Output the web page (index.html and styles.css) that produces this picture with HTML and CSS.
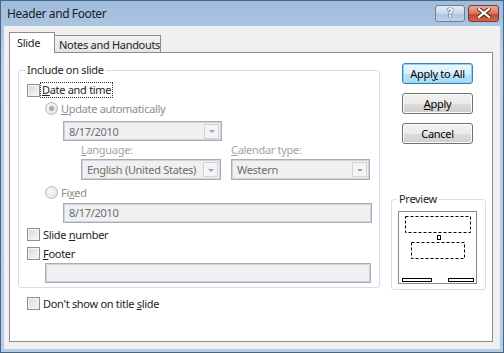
FILE: index.html
```html
<!DOCTYPE html>
<html>

<head>
  <title>Header and Footer</title>
  <link rel="stylesheet" href="styles.css">
</head>

<body>
  <div class="window">
    <div class="titlebar">
      <span class="title">Header and Footer</span>
      <div class="caption-buttons">
        <span class="cap-btn help">?</span>
        <span class="cap-btn close">
          <svg width="14" height="10" viewBox="0 0 14 10">
            <path d="M2 1 L12 9 M12 1 L2 9" stroke="#5a2a22" stroke-width="4.2" stroke-linecap="square"/>
            <path d="M2 1 L12 9 M12 1 L2 9" stroke="#fff" stroke-width="2.2" stroke-linecap="square"/>
          </svg>
        </span>
      </div>
    </div>

    <div class="client">
      <div class="tabs">
        <span class="tab active">Slide</span>
        <span class="tab">Notes and Handouts</span>
      </div>

      <div class="panel">
        <div class="left">
          <fieldset class="group include">
            <legend>Include on slide</legend>

            <div class="row">
              <span class="checkbox"></span>
              <span class="focus"><u>D</u>ate and time</span>
            </div>

            <div class="row disabled indent-1">
              <span class="radio checked"></span>
              <span class="row-text"><u>U</u>pdate automatically</span>
            </div>

            <div class="combo date-combo">
              <span class="value">8/17/2010</span>
              <span class="drop"></span>
            </div>

            <div class="fields">
              <div class="field lang">
                <span class="field-label"><u>L</u>anguage:</span>
                <div class="combo">
                  <span class="value">English (United States)</span>
                  <span class="drop"></span>
                </div>
              </div>
              <div class="field calendar">
                <span class="field-label"><u>C</u>alendar type:</span>
                <div class="combo">
                  <span class="value">Western</span>
                  <span class="drop"></span>
                </div>
              </div>
            </div>

            <div class="row disabled indent-1 fixed-row">
              <span class="radio"></span>
              <span class="row-text">Fi<u>x</u>ed</span>
            </div>

            <div class="textbox fixed-box">8/17/2010</div>

            <div class="row slide-row">
              <span class="checkbox"></span>
              <span class="row-text">Slide <u>n</u>umber</span>
            </div>

            <div class="row footer-row">
              <span class="checkbox"></span>
              <span class="row-text"><u>F</u>ooter</span>
            </div>

            <div class="textbox footer-box"></div>
          </fieldset>

          <div class="row title-row">
            <span class="checkbox"></span>
            <span class="row-text">Don't show on title <u>s</u>lide</span>
          </div>
        </div>

        <div class="right">
          <button class="btn default">Appl<u>y</u> to All</button>
          <button class="btn"><u>A</u>pply</button>
          <button class="btn">Cancel</button>

          <fieldset class="group preview">
            <legend>Preview</legend>
            <div class="preview-box">
              <svg width="77" height="71" viewBox="0 0 77 71">
                <rect x="6.5" y="4.5" width="65" height="16" fill="none" stroke="#000" stroke-dasharray="3 2"/>
                <rect x="38.5" y="23.5" width="3" height="4" fill="none" stroke="#000"/>
                <rect x="12.5" y="30.5" width="53" height="16" fill="none" stroke="#000" stroke-dasharray="3 2"/>
                <rect x="3.5" y="66.5" width="29" height="3" fill="none" stroke="#000"/>
                <rect x="49.5" y="66.5" width="25" height="3" fill="none" stroke="#000"/>
              </svg>
            </div>
          </fieldset>
        </div>
      </div>
    </div>
  </div>
</body>

</html>
```

FILE: styles.css
```css
body {
  margin: 0;
  font-family: "Noto Sans", sans-serif;
  font-size: 11px;
  letter-spacing: -0.3px;
  color: #1e1e1e;
}

.window {
  width: 504px;
  height: 353px;
  box-sizing: border-box;
  border: 1px solid #4a6482;
  padding: 0 3px 3px;
  background: linear-gradient(#9fbcdc, #b9d1ea 60px, #b4cde8);
  display: flex;
  flex-direction: column;
}

/* title bar */
.titlebar {
  height: 25px;
  display: flex;
  align-items: center;
  padding-left: 3px;
}

.title {
  flex: 1;
  font-size: 12px;
  letter-spacing: -0.4px;
  color: #1b1b1b;
  line-height: 16px;
}

.caption-buttons {
  display: flex;
  gap: 3px;
  margin-right: 1px;
  margin-top: -1px;
}

.cap-btn {
  height: 17px;
  box-sizing: border-box;
  border: 1px solid #6d7f95;
  border-radius: 3px;
  display: flex;
  align-items: center;
  justify-content: center;
}

.help {
  width: 30px;
  background: linear-gradient(#e4edf7, #c5d7ec 50%, #afc6e1 51%, #bdd1e9);
  color: #fff;
  font-family: "DejaVu Sans", sans-serif;
  font-weight: bold;
  font-size: 12px;
  text-shadow: 0 0 1px #33475f, 0 0 1px #33475f, 0 0 1px #33475f;
}

.close {
  width: 31px;
  border-color: #7a3a30;
  background: linear-gradient(#e9a796, #d7765f 50%, #c3452c 51%, #d3664a);
}

/* client area */
.client {
  flex: 1;
  background: #f0f0f0;
  padding: 6px 7px 7px 5px;
  display: flex;
  flex-direction: column;
}

.tabs {
  display: flex;
  align-items: flex-end;
  margin-bottom: -1px;
}

.tab {
  box-sizing: border-box;
  border: 1px solid #898c95;
  border-bottom: none;
  height: 17px;
  margin-bottom: 1px;
  padding: 0 4px;
  line-height: 17px;
  white-space: nowrap;
  background: linear-gradient(#f3f3f3, #e5e5e5);
  color: #1e1e1e;
}

.tab.active {
  position: relative;
  z-index: 1;
  height: 21px;
  width: 46px;
  margin-bottom: 0;
  padding: 0 7px;
  line-height: 20px;
  background: #fff;
}

.tab + .tab {
  margin-left: -1px;
  width: 107px;
}

.panel {
  flex: 1;
  background: #fff;
  border: 1px solid #898c95;
  display: flex;
}

.left {
  padding: 9px 0 0 8px;
}

.right {
  margin-left: 11px;
  width: 95px;
  padding-top: 10px;
  display: flex;
  flex-direction: column;
}

/* group boxes */
.group {
  margin: 0;
  min-width: 0;
  box-sizing: border-box;
  border: 1px solid #d5dfe5;
  border-radius: 3px;
}

.group legend {
  line-height: 16px;
  padding: 0 2px;
}

.include {
  width: 362px;
  padding: 4px 7px 4px 8px;
}

.include legend {
  margin-left: -2px;
}

.row {
  display: flex;
  align-items: center;
  height: 16px;
}

.row-text {
  margin-left: 3px;
}

.indent-1 {
  margin-left: 18px;
  margin-top: 2px;
}

.disabled {
  color: #8d8d8d;
}

.focus {
  margin-left: 1px;
  padding: 0 1px;
  line-height: 14px;
  outline: 1px dotted #333;
}

.checkbox {
  width: 13px;
  height: 13px;
  box-sizing: border-box;
  border: 1px solid #8f8f8f;
  background: linear-gradient(135deg, #d6d8db, #f8f8f8);
  box-shadow: inset 0 0 0 1px #f4f4f4;
  flex-shrink: 0;
}

.radio {
  width: 13px;
  height: 13px;
  box-sizing: border-box;
  border: 1px solid #b9b9b9;
  border-radius: 50%;
  background: radial-gradient(circle at 40% 40%, #fafafa, #dcdcdc);
  display: flex;
  align-items: center;
  justify-content: center;
  flex-shrink: 0;
}

.radio.checked::after {
  content: "";
  width: 5px;
  height: 5px;
  border-radius: 50%;
  background: #a8a8a8;
}

/* combos and text boxes */
.combo,
.textbox {
  box-sizing: border-box;
  border: 1px solid #abadb3;
  box-shadow: inset 0 0 0 1px #c3d6ec;
  background: #f0f0f0;
  color: #6d6d6d;
}

.combo {
  display: flex;
  align-items: center;
  height: 21px;
  padding: 0 2px 0 5px;
}

.combo .value {
  flex: 1;
  white-space: nowrap;
}

.drop {
  width: 15px;
  height: 15px;
  box-sizing: border-box;
  border: 1px solid #d2d2d2;
  background: #f4f4f4;
  display: flex;
  align-items: center;
  justify-content: center;
}

.drop::after {
  content: "";
  border-left: 3px solid transparent;
  border-right: 3px solid transparent;
  border-top: 3px solid #a6a6a6;
  margin-top: 1px;
}

.date-combo {
  margin: 5px 0 0 36px;
  width: 159px;
  height: 20px;
}

.fields {
  display: flex;
  gap: 10px;
  margin: 1px 0 0 54px;
}

.field {
  display: flex;
  flex-direction: column;
}

.field-label {
  line-height: 16px;
  color: #a3a3a3;
}

.field .combo {
  margin-top: 1px;
}

.lang {
  width: 140px;
}

.calendar {
  width: 139px;
}

.fixed-row {
  margin-top: 4px;
}

.textbox {
  height: 20px;
  line-height: 18px;
  padding-left: 5px;
}

.fixed-box {
  margin: 3px 0 0 36px;
  width: 309px;
}

.slide-row {
  margin-top: 3px;
}

.footer-row {
  margin-top: 3px;
}

.footer-box {
  margin: 2px 0 0 18px;
  width: 326px;
}

.title-row {
  margin: 7px 0 0 9px;
}

/* buttons */
.btn {
  font-family: inherit;
  font-size: 11px;
  letter-spacing: -0.3px;
  color: #000;
  width: 71px;
  height: 21px;
  margin: 0 0 9px 11px;
  padding: 0;
  border: 1px solid #707070;
  border-radius: 3px;
  background: linear-gradient(#f2f2f2, #ebebeb 50%, #dddddd 51%, #cfcfcf);
  box-shadow: inset 0 0 0 1px #fcfcfc;
}

.btn.default {
  border-color: #3c7fb1;
  background: linear-gradient(#ecf7fd, #dcf0fb 50%, #bee4f8 51%, #a8d9f5);
  box-shadow: inset 0 0 0 1px #8fd2f5;
}

.preview {
  margin-top: 38px;
  width: 95px;
  padding: 4px 6px 5px 6px;
}

.preview legend {
  margin-left: -1px;
}

.preview-box {
  width: 79px;
  height: 73px;
  box-sizing: border-box;
  border: 1px solid #8a8a8a;
}

.preview-box svg {
  display: block;
}
```
